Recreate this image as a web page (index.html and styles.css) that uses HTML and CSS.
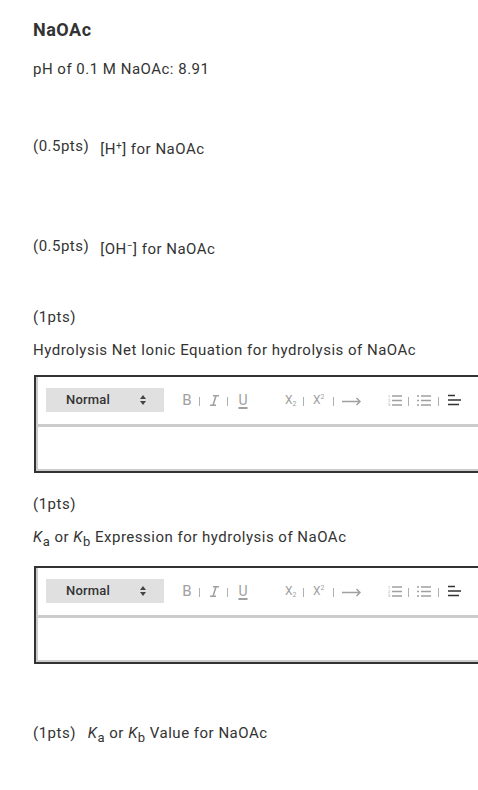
FILE: index.html
```html
<!DOCTYPE html>
<html>
<head>
<meta charset="utf-8">
<link rel="stylesheet" href="styles.css">
</head>
<body>
<div class="page">
  <h1 class="title">NaOAc</h1>
  <p class="ph">pH of 0.1 M NaOAc: 8.91</p>

  <div class="q q-h">
    <span class="pts">(0.5pts)</span>
    <span class="qtext">[H<sup class="sup">+</sup>] for NaOAc</span>
  </div>

  <div class="q q-oh">
    <span class="pts">(0.5pts)</span>
    <span class="qtext">[OH<sup class="sup">−</sup>] for NaOAc</span>
  </div>

  <div class="pts-line first">(1pts)</div>
  <div class="qline">Hydrolysis Net Ionic Equation for hydrolysis of NaOAc</div>

  <div class="editor">
    <div class="editor-inner">
      <div class="toolbar">
        <div class="select">
          <span class="select-label">Normal</span>
          <svg class="select-arrows" width="6" height="10" viewBox="0 0 6 10"><path d="M3 0 L6 4 H0 Z M0 6 H6 L3 10 Z" fill="#444"/></svg>
        </div>
        <span class="tool t-b">B</span>
        <span class="sep s1"></span>
        <svg class="tool t-i" width="9" height="11" viewBox="0 0 9 11"><path d="M3 0.75 H9 M0 10.25 H6 M6 0.75 L3 10.25" stroke="#a0a0a0" stroke-width="1.5" fill="none"/></svg>
        <span class="sep s2"></span>
        <span class="tool t-u">U</span>
        <span class="tool t-x1">X<span class="tsub">2</span></span>
        <span class="sep s3"></span>
        <span class="tool t-x2">X<span class="tsup">2</span></span>
        <span class="sep s4"></span>
        <svg class="tool t-arrow" width="19" height="10" viewBox="0 0 19 10"><path d="M0 5.5 H18 M14.5 2 L18 5.5 L14.5 9" stroke="#a0a0a0" stroke-width="1.5" fill="none"/></svg>
        <svg class="tool t-ol" width="14" height="12" viewBox="0 0 14 12"><text x="0" y="3.5" font-size="4" fill="#a0a0a0" font-family="Roboto, sans-serif">1</text><text x="0" y="8" font-size="4" fill="#a0a0a0" font-family="Roboto, sans-serif">2</text><text x="0" y="12" font-size="4" fill="#a0a0a0" font-family="Roboto, sans-serif">3</text><path d="M4 2 H14 M4 6.5 H14 M4 11 H14" stroke="#a0a0a0" stroke-width="1.5"/></svg>
        <span class="sep s5"></span>
        <svg class="tool t-ul" width="14" height="12" viewBox="0 0 14 12"><path d="M0 2 H2 M0 6.5 H2 M0 11 H2" stroke="#a0a0a0" stroke-width="1.5"/><path d="M4 2 H14 M4 6.5 H14 M4 11 H14" stroke="#a0a0a0" stroke-width="1.5"/></svg>
        <span class="sep s6"></span>
        <svg class="tool t-align" width="13" height="12" viewBox="0 0 13 12"><path d="M0 1.5 H7 M0 6 H13 M0 10.5 H11" stroke="#333" stroke-width="1.6"/></svg>
      </div>
      <div class="area"></div>
    </div>
  </div>

  <div class="pts-line second">(1pts)</div>
  <div class="qline"><i class="k">K</i><span class="ksub">a</span> or <i class="k">K</i><span class="ksub">b</span> Expression for hydrolysis of NaOAc</div>

  <div class="editor editor-2">
    <div class="editor-inner">
      <div class="toolbar">
        <div class="select">
          <span class="select-label">Normal</span>
          <svg class="select-arrows" width="6" height="10" viewBox="0 0 6 10"><path d="M3 0 L6 4 H0 Z M0 6 H6 L3 10 Z" fill="#444"/></svg>
        </div>
        <span class="tool t-b">B</span>
        <span class="sep s1"></span>
        <svg class="tool t-i" width="9" height="11" viewBox="0 0 9 11"><path d="M3 0.75 H9 M0 10.25 H6 M6 0.75 L3 10.25" stroke="#a0a0a0" stroke-width="1.5" fill="none"/></svg>
        <span class="sep s2"></span>
        <span class="tool t-u">U</span>
        <span class="tool t-x1">X<span class="tsub">2</span></span>
        <span class="sep s3"></span>
        <span class="tool t-x2">X<span class="tsup">2</span></span>
        <span class="sep s4"></span>
        <svg class="tool t-arrow" width="19" height="10" viewBox="0 0 19 10"><path d="M0 5.5 H18 M14.5 2 L18 5.5 L14.5 9" stroke="#a0a0a0" stroke-width="1.5" fill="none"/></svg>
        <svg class="tool t-ol" width="14" height="12" viewBox="0 0 14 12"><text x="0" y="3.5" font-size="4" fill="#a0a0a0" font-family="Roboto, sans-serif">1</text><text x="0" y="8" font-size="4" fill="#a0a0a0" font-family="Roboto, sans-serif">2</text><text x="0" y="12" font-size="4" fill="#a0a0a0" font-family="Roboto, sans-serif">3</text><path d="M4 2 H14 M4 6.5 H14 M4 11 H14" stroke="#a0a0a0" stroke-width="1.5"/></svg>
        <span class="sep s5"></span>
        <svg class="tool t-ul" width="14" height="12" viewBox="0 0 14 12"><path d="M0 2 H2 M0 6.5 H2 M0 11 H2" stroke="#a0a0a0" stroke-width="1.5"/><path d="M4 2 H14 M4 6.5 H14 M4 11 H14" stroke="#a0a0a0" stroke-width="1.5"/></svg>
        <span class="sep s6"></span>
        <svg class="tool t-align" width="13" height="12" viewBox="0 0 13 12"><path d="M0 1.5 H7 M0 6 H13 M0 10.5 H11" stroke="#333" stroke-width="1.6"/></svg>
      </div>
      <div class="area"></div>
    </div>
  </div>

  <div class="q q-last">
    <span class="pts">(1pts)</span>
    <span class="qtext flat"><i class="k">K</i><span class="ksub">a</span> or <i class="k">K</i><span class="ksub">b</span> Value for NaOAc</span>
  </div>
</div>
</body>
</html>
```

FILE: styles.css
```css
* { box-sizing: border-box; }
html, body {
  margin: 0;
  padding: 0;
  overflow: hidden;
  background: #fff;
}
body {
  font-family: Roboto, "Liberation Sans", sans-serif;
  color: #333;
  font-size: 15px;
  line-height: 20px;
  letter-spacing: 0.5px;
}
.page {
  padding: 19px 0 0 33px;
}
.title {
  margin: 0;
  font-size: 18px;
  font-weight: 700;
  line-height: 22px;
}
.ph {
  margin: 18px 0 0;
  font-size: 15px;
}
.q {
  display: flex;
  align-items: flex-start;
  gap: 11px;
}
.q .qtext {
  padding-top: 3px;
}
.q .qtext.flat {
  padding-top: 0;
}
.q-h { margin-top: 57px; }
.q-oh { margin-top: 77px; }
.q-last { margin-top: 59px; gap: 12px; }

.sup {
  font-size: 10px;
  line-height: 0;
  vertical-align: 5px;
}
.k { font-style: italic; }
.ksub {
  font-size: 13px;
  line-height: 0;
  vertical-align: -4px;
}

.pts-line.first { margin-top: 48px; }
.pts-line.second { margin-top: 21px; }
.qline { margin-top: 13px; }

.editor {
  width: 470px;
  margin: 15px 0 0 1px;
  border: 2px solid #333;
  letter-spacing: 0;
}
.editor-2 { margin-top: 19px; }
.editor-inner {
  border-left: 2px solid #ccc;
  border-bottom: 2px solid #ccc;
}
.toolbar {
  display: flex;
  align-items: center;
  padding: 11px 0 12px 8px;
  border-bottom: 3px solid #ccc;
}
.select {
  width: 118px;
  height: 24px;
  background: #e0e0e0;
  display: flex;
  align-items: center;
  padding-left: 20px;
}
.select-label {
  font-size: 13px;
  font-weight: 500;
  color: #333;
  width: 74px;
  letter-spacing: 0.2px;
}
.select-arrows { display: block; }
.tool {
  flex: none;
  display: block;
  color: #a0a0a0;
  text-align: center;
}
.sep {
  flex: none;
  width: 1px;
  height: 9px;
  background: #b0b0b0;
  margin-top: 2px;
}
.t-b { width: 18px; margin-left: 14px; font-size: 15px; line-height: 16px; }
.s1 { margin-left: 3px; }
.t-i { margin-left: 10px; }
.s2 { margin-left: 8px; }
.t-u {
  width: 12px;
  margin-left: 9px;
  font-size: 14px;
  line-height: 16px;
  text-decoration: underline;
  text-decoration-thickness: 1.5px;
  text-underline-offset: 2px;
}
.t-x1, .t-x2 {
  width: 15px;
  font-size: 12px;
  line-height: 14px;
  text-align: left;
}
.t-x1 { margin-left: 36px; }
.tsub { font-size: 7px; vertical-align: -2px; line-height: 0; }
.tsup { font-size: 7px; vertical-align: 5px; line-height: 0; }
.s3 { margin-left: 3px; }
.t-x2 { margin-left: 9px; }
.s4 { margin-left: 5px; }
.t-arrow { margin-left: 8px; margin-top: 1px; }
.t-ol { margin-left: 27px; }
.s5 { margin-left: 6px; }
.t-ul { margin-left: 8px; }
.s6 { margin-left: 7px; }
.t-align { margin-left: 9px; }
.area {
  height: 42px;
}
```
